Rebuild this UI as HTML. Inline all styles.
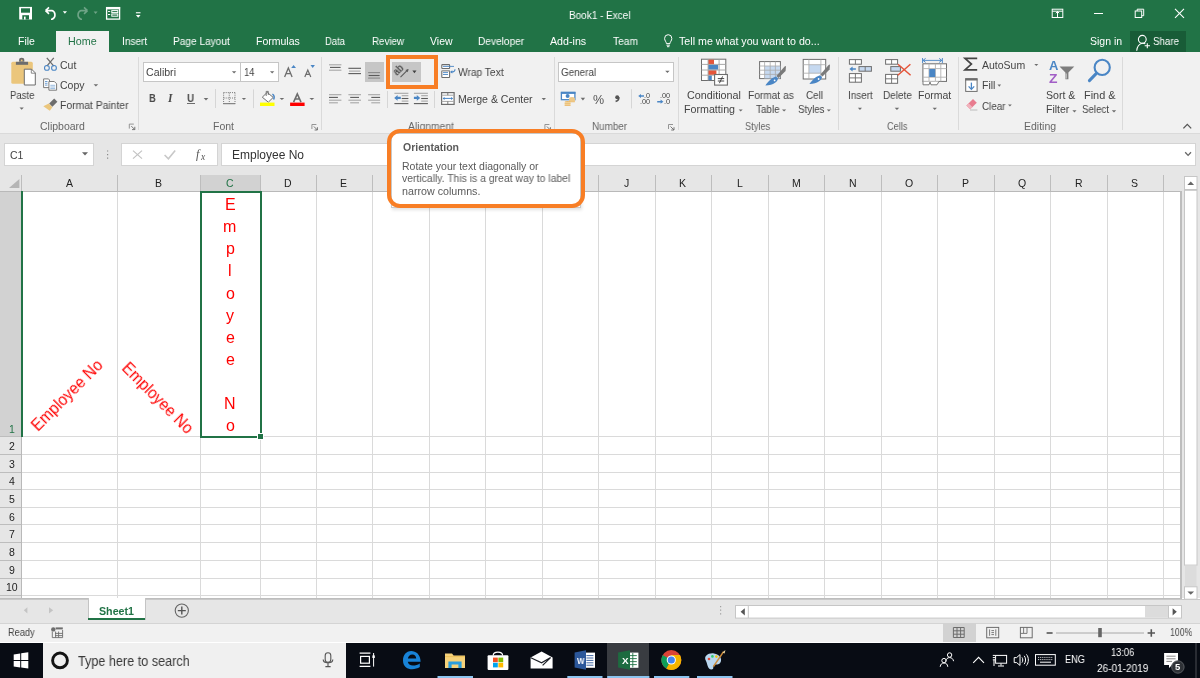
<!DOCTYPE html>
<html><head><meta charset="utf-8"><title>Book1 - Excel</title>
<style>
html,body{margin:0;padding:0;}
body{width:1200px;height:678px;overflow:hidden;position:relative;background:#fff;font-family:"Liberation Sans", sans-serif;}
.a{position:absolute;}
.t{line-height:0;white-space:pre;will-change:transform;}
svg.a{overflow:visible;}

</style></head><body>
<div class="a" style="left:0px;top:0px;width:1200px;height:52px;background:#217346;"></div>
<div class="a t" style="left:568.50px;top:15px;font-size:10.5px;color:#ffffff;transform:scaleX(0.9493);transform-origin:0 4px;">Book1 - Excel</div>
<svg class="a" style="left:0px;top:0px;" width="150" height="30" viewBox="0 0 150 30">
<rect x="19.2" y="6.9" width="12.8" height="12.6" fill="#ffffff"/>
<rect x="21" y="8.3" width="9" height="4.4" fill="#217346"/>
<rect x="22.3" y="15.2" width="6.7" height="4.3" fill="#217346"/>
<rect x="24" y="16.6" width="1.6" height="2.9" fill="#ffffff"/>
<path d="M45.5 10.6 L49 7.4 M45.5 10.6 L49 13.8 M45.6 10.6 H52 A4.6 4.6 0 0 1 52 19.2 H51" stroke="#ffffff" stroke-width="1.6" fill="none"/>
<path d="M62.8 11.3 H67 L64.9 13.8 Z" fill="#ffffff"/>
<g opacity="0.35"><path d="M87.5 10.6 L84 7.4 M87.5 10.6 L84 13.8 M87.4 10.6 H81 A4.6 4.6 0 0 0 81 19.2 H82" stroke="#ffffff" stroke-width="1.6" fill="none"/>
<path d="M93.6 11.6 H97.6 L95.6 14.1 Z" fill="#ffffff"/></g>
<rect x="106.6" y="7.6" width="13" height="11.5" fill="none" stroke="#ffffff" stroke-width="1.3"/>
<rect x="106" y="7" width="14.1" height="2.4" fill="#ffffff"/>
<rect x="108" y="11" width="2.2" height="0.9" fill="#ffffff"/>
<rect x="108" y="14" width="2.2" height="1" fill="#ffffff"/>
<rect x="111.8" y="10.6" width="6" height="2" fill="none" stroke="#ffffff" stroke-width="1"/>
<rect x="111.8" y="14" width="6" height="2.2" fill="none" stroke="#ffffff" stroke-width="1"/>
<rect x="135.9" y="12.2" width="4.6" height="1.1" fill="#ffffff"/>
<path d="M135.9 15 H140.5 L138.2 17.8 Z" fill="#ffffff"/>
</svg>
<svg class="a" style="left:1040px;top:0px;" width="160" height="30" viewBox="0 0 160 30">
<rect x="12.2" y="9.2" width="10.6" height="8.3" fill="none" stroke="#ffffff" stroke-width="1"/>
<path d="M12.2 11.2 H22.8 M17.5 11.2 V17.5 M15.8 13.2 L17.5 11.6 L19.2 13.2" stroke="#ffffff" stroke-width="1" fill="none"/>
<path d="M54 13.5 H63" stroke="#ffffff" stroke-width="1"/>
<rect x="95.2" y="11" width="6.5" height="6.5" fill="none" stroke="#ffffff" stroke-width="1"/>
<path d="M97.2 11 V9.2 H103.7 V15.7 H101.7" stroke="#ffffff" stroke-width="1" fill="none"/>
<path d="M135 8.8 L144 17.8 M144 8.8 L135 17.8" stroke="#ffffff" stroke-width="1.1"/>
</svg>
<div class="a" style="left:56px;top:31px;width:53px;height:21px;background:#f1f1f1;"></div>
<div class="a t" style="left:17.50px;top:41px;font-size:10.5px;color:#ffffff;transform:scaleX(0.9751);transform-origin:0 4px;">File</div>
<div class="a t" style="left:67.70px;top:41px;font-size:10.5px;color:#217346;transform:scaleX(1.0209);transform-origin:0 4px;">Home</div>
<div class="a t" style="left:121.70px;top:41px;font-size:10.5px;color:#ffffff;transform:scaleX(0.9632);transform-origin:0 4px;">Insert</div>
<div class="a t" style="left:173.20px;top:41px;font-size:10.5px;color:#ffffff;transform:scaleX(0.9632);transform-origin:0 4px;">Page Layout</div>
<div class="a t" style="left:255.70px;top:41px;font-size:10.5px;color:#ffffff;transform:scaleX(0.9939);transform-origin:0 4px;">Formulas</div>
<div class="a t" style="left:325.00px;top:41px;font-size:10.5px;color:#ffffff;transform:scaleX(0.9014);transform-origin:0 4px;">Data</div>
<div class="a t" style="left:371.70px;top:41px;font-size:10.5px;color:#ffffff;transform:scaleX(0.9292);transform-origin:0 4px;">Review</div>
<div class="a t" style="left:429.50px;top:41px;font-size:10.5px;color:#ffffff;">View</div>
<div class="a t" style="left:477.50px;top:41px;font-size:10.5px;color:#ffffff;transform:scaleX(0.9650);transform-origin:0 4px;">Developer</div>
<div class="a t" style="left:550.00px;top:41px;font-size:10.5px;color:#ffffff;transform:scaleX(1.0166);transform-origin:0 4px;">Add-ins</div>
<div class="a t" style="left:612.50px;top:41px;font-size:10.5px;color:#ffffff;transform:scaleX(0.9732);transform-origin:0 4px;">Team</div>
<div class="a t" style="left:679.00px;top:41px;font-size:10.5px;color:#ffffff;transform:scaleX(1.0171);transform-origin:0 4px;">Tell me what you want to do...</div>
<div class="a t" style="left:1089.60px;top:41px;font-size:10.5px;color:#ffffff;transform:scaleX(0.9873);transform-origin:0 4px;">Sign in</div>
<div class="a" style="left:1130px;top:31px;width:56px;height:21px;background:#185c37;"></div>
<div class="a t" style="left:1153.00px;top:41px;font-size:10.5px;color:#ffffff;transform:scaleX(0.9275);transform-origin:0 4px;">Share</div>
<svg class="a" style="left:1130px;top:30px;" width="30" height="24" viewBox="0 0 30 24"><circle cx="12.3" cy="9.3" r="3.9" fill="none" stroke="#ffffff" stroke-width="1.1"/>
<path d="M6.7 20.8 C7 17 9 14 12.3 13.2 C13.5 13.1 14.5 13.4 15.3 13.8" fill="none" stroke="#ffffff" stroke-width="1.1"/>
<path d="M14.7 15.7 H20 M17.3 13.2 V18.3" stroke="#ffffff" stroke-width="1.1"/></svg>
<svg class="a" style="left:660px;top:30px;" width="16" height="22" viewBox="0 0 16 22"><path d="M6.4 13.6 C6.4 11.8 4.6 10.8 4.6 8.4 A3.6 3.7 0 0 1 11.8 8.4 C11.8 10.8 10 11.8 10 13.6 Z" fill="none" stroke="#ffffff" stroke-width="1"/>
<path d="M6.5 15.2 H9.9 M7 16.7 H9.4" stroke="#ffffff" stroke-width="1"/></svg>
<div class="a" style="left:0px;top:52px;width:1200px;height:81px;background:#f1f1f1;"></div>
<div class="a" style="left:392px;top:62px;width:29px;height:20px;background:#c6c6c6;"></div>
<div class="a" style="left:364.5px;top:62px;width:19.5px;height:20px;background:#c6c6c6;"></div>
<div class="a" style="left:0px;top:133px;width:1200px;height:1px;background:#dadada;"></div>
<div class="a" style="left:138px;top:57px;width:1px;height:73px;background:#dadada;"></div>
<div class="a" style="left:321px;top:57px;width:1px;height:73px;background:#dadada;"></div>
<div class="a" style="left:554px;top:57px;width:1px;height:73px;background:#dadada;"></div>
<div class="a" style="left:678px;top:57px;width:1px;height:73px;background:#dadada;"></div>
<div class="a" style="left:837.5px;top:57px;width:1px;height:73px;background:#dadada;"></div>
<div class="a" style="left:957.5px;top:57px;width:1px;height:73px;background:#dadada;"></div>
<div class="a" style="left:1122px;top:57px;width:1px;height:73px;background:#dadada;"></div>
<div class="a t" style="left:39.80px;top:126px;font-size:10.5px;color:#666666;transform:scaleX(0.9899);transform-origin:0 4px;">Clipboard</div>
<div class="a t" style="left:212.90px;top:126px;font-size:10.5px;color:#666666;transform:scaleX(0.9802);transform-origin:0 4px;">Font</div>
<div class="a t" style="left:408.00px;top:126px;font-size:10.5px;color:#666666;transform:scaleX(0.9849);transform-origin:0 4px;">Alignment</div>
<div class="a t" style="left:591.90px;top:126px;font-size:10.5px;color:#666666;transform:scaleX(0.9395);transform-origin:0 4px;">Number</div>
<div class="a t" style="left:744.70px;top:126px;font-size:10.5px;color:#666666;transform:scaleX(0.8813);transform-origin:0 4px;">Styles</div>
<div class="a t" style="left:887.00px;top:126px;font-size:10.5px;color:#666666;transform:scaleX(0.8782);transform-origin:0 4px;">Cells</div>
<div class="a t" style="left:1024.00px;top:126px;font-size:10.5px;color:#666666;">Editing</div>
<div class="a t" style="left:10.00px;top:95px;font-size:10.5px;color:#444444;transform:scaleX(0.9122);transform-origin:0 4px;">Paste</div>
<svg class="a" style="left:0px;top:52px;" width="140" height="62" viewBox="0 0 140 62">
<rect x="11.3" y="9.8" width="21.5" height="22" rx="1.5" fill="#ebc67c"/>
<rect x="15.9" y="9.8" width="12.2" height="3" fill="#6d6d6d"/>
<path d="M19.1 9.8 V8.2 A2.6 2.4 0 0 1 24.3 8.2 V9.8 Z" fill="#6d6d6d"/>
<circle cx="21.7" cy="8.4" r="0.9" fill="#ebc67c"/>
<path d="M24.3 17.2 H31.6 L35.3 20.9 V33 H24.3 Z" fill="#fff" stroke="#6d6d6d" stroke-width="1"/>
<path d="M31.3 17.2 V21.2 H35.3" fill="none" stroke="#6d6d6d" stroke-width="0.8"/>
<path d="M19.5 55.6 H23.8 L21.65 57.7 Z" fill="#6d6d6d"/>
<path d="M46.8 5.8 L53.8 14.2 M53.8 5.8 L46.8 14.2" stroke="#6d6d6d" stroke-width="1.3"/>
<circle cx="46.9" cy="15.9" r="2.4" fill="none" stroke="#4a86c5" stroke-width="1.1"/>
<circle cx="54" cy="15.9" r="2.4" fill="none" stroke="#4a86c5" stroke-width="1.1"/>
<path d="M43.6 26.9 H48.5 L49.5 28 V35.6 H43.6 Z" fill="#fff" stroke="#6d6d6d" stroke-width="0.9"/>
<path d="M45 29.5 H47.5 M45 31.3 H47.5 M45 33.1 H47.5" stroke="#4a86c5" stroke-width="0.8"/>
<path d="M48.9 29.5 H54.3 L56.6 31.8 V38.2 H48.9 Z" fill="#fff" stroke="#6d6d6d" stroke-width="0.9"/>
<path d="M50.3 33.3 H55.2 M50.3 35 H55.2 M50.3 36.6 H55.2" stroke="#4a86c5" stroke-width="0.8" opacity="0.7"/>
<path d="M43.3 54.2 L48.8 51.6 L52.4 55.2 L49.8 58.7 Z" fill="#ebc67c"/>
<path d="M49.2 51.5 L54.2 46.5 L57.4 49.7 L52.4 54.7 Z" fill="#6d6d6d"/>
</svg>
<div class="a t" style="left:60.40px;top:65px;font-size:10.5px;color:#444444;">Cut</div>
<div class="a t" style="left:60.40px;top:84.5px;font-size:10.5px;color:#444444;transform:scaleX(0.9912);transform-origin:0 4px;">Copy</div>
<div class="a t" style="left:60.40px;top:105px;font-size:10.5px;color:#444444;transform:scaleX(0.9877);transform-origin:0 4px;">Format Painter</div>
<div class="a" style="left:143px;top:62px;width:98px;height:20px;background:#ffffff;border:1px solid #c6c6c6;box-sizing:border-box;"></div>
<div class="a" style="left:240px;top:62px;width:39px;height:20px;background:#ffffff;border:1px solid #c6c6c6;box-sizing:border-box;"></div>
<div class="a t" style="left:145.80px;top:72px;font-size:10.5px;color:#444444;transform:scaleX(1.0079);transform-origin:0 4px;">Calibri</div>
<div class="a t" style="left:244.00px;top:72px;font-size:10.5px;color:#444444;transform:scaleX(0.8984);transform-origin:0 4px;">14</div>
<svg class="a" style="left:0px;top:0px;" width="1200" height="140" viewBox="0 0 1200 140">
<path d="M231.9 71.2 H236.3 L234.10000000000002 73.6 Z" fill="#6d6d6d"/>
<path d="M93.6 84.2 H98.2 L95.9 86.6 Z" fill="#6d6d6d"/>
<path d="M270 71.2 H274.3 L272.15 73.6 Z" fill="#6d6d6d"/>
<path d="M284.6 76.9 L288.35 67.9 L292.1 76.9 M285.9 73.6 H290.8" fill="none" stroke="#6d6d6d" stroke-width="1.3"/>
<path d="M291.2 67.9 H296 L293.6 65 Z" fill="#4a86c5"/>
<path d="M304.8 76.9 L307.8 69.9 L310.8 76.9 M305.9 74.3 H309.7" fill="none" stroke="#6d6d6d" stroke-width="1.2"/>
<path d="M310.5 65 H314.9 L312.7 67.9 Z" fill="#4a86c5"/>
<path d="M203.7 98 H208.3 L206.0 100.4 Z" fill="#6d6d6d"/>
<rect x="215" y="89" width="1" height="19" fill="#d6d6d6"/>
<path d="M241.8 97.9 H246.1 L243.95 100 Z" fill="#6d6d6d"/>
<rect x="253" y="89.4" width="1" height="18.7" fill="#d6d6d6"/>
<path d="M279.6 97.9 H284.2 L281.9 100 Z" fill="#6d6d6d"/>
<path d="M309.4 97.9 H314.3 L311.85 100 Z" fill="#6d6d6d"/>
<path d="M223.6 92.6 H235 M223.6 92.6 V103.6 M235 92.6 V103.6 M223.6 98 H235 M229.3 92.6 V103.6" fill="none" stroke="#6d6d6d" stroke-width="0.9" stroke-dasharray="1 1.1"/>
<path d="M223.1 103.7 H235.3" stroke="#6d6d6d" stroke-width="1"/>
<path d="M262.3 97.2 L267.2 92.4 L273.2 97.4 L268.3 102.2 Z" fill="#fff" stroke="#6d6d6d" stroke-width="1"/>
<path d="M266.2 96 V91.4 H268.3 V95" fill="none" stroke="#6d6d6d" stroke-width="0.9"/>
<path d="M272.4 94.2 C274.5 95.5 274.6 97.8 273.5 99.5" fill="none" stroke="#4a86c5" stroke-width="1.5"/>
<rect x="260" y="102.6" width="14.5" height="3.4" fill="#ffff00"/>
<path d="M293.6 102.2 L297.3 93.9 L301 102.2 M295 99 H299.6" fill="none" stroke="#6d6d6d" stroke-width="1.6"/>
<rect x="290.1" y="102.6" width="14.5" height="3.4" fill="#ff0000"/>
</svg>
<div class="a t" style="left:148.70px;top:98.3px;font-size:11px;color:#4a4a4a;font-weight:bold;transform:scaleX(0.8550);transform-origin:0 4px;">B</div>
<div class="a t" style="left:168.30px;top:98.3px;font-size:11.5px;color:#4a4a4a;font-family:'Liberation Serif';font-style:italic;font-weight:bold;">I</div>
<div class="a t" style="left:187.30px;top:98.3px;font-size:11px;color:#4a4a4a;font-weight:bold;transform:scaleX(0.9053);transform-origin:0 4px;">U</div>
<div class="a" style="left:187px;top:103.2px;width:8px;height:1px;background:#6d6d6d;"></div>
<div class="a t" style="left:458.00px;top:72px;font-size:10.5px;color:#444444;transform:scaleX(0.9725);transform-origin:0 4px;">Wrap Text</div>
<div class="a t" style="left:458.40px;top:99px;font-size:10.5px;color:#444444;transform:scaleX(1.0064);transform-origin:0 4px;">Merge &amp; Center</div>
<svg class="a" style="left:0px;top:0px;" width="1200" height="140" viewBox="0 0 1200 140">
<path d="M329 64.8 H341.4" stroke="#a6a6a6" stroke-width="1.1"/><path d="M330 67.4 H340.6" stroke="#5a5a5a" stroke-width="1.1"/><path d="M329 70.2 H341.4" stroke="#a6a6a6" stroke-width="1.1"/>
<path d="M348.4 68.3 H361" stroke="#5a5a5a" stroke-width="1.1"/><path d="M349 71.1 H360.4" stroke="#a6a6a6" stroke-width="1.1"/><path d="M348.4 73.6 H361" stroke="#5a5a5a" stroke-width="1.1"/>
<path d="M368.1 72.6 H380.1" stroke="#8a8a8a" stroke-width="1.1"/><path d="M368.6 75.5 H379.6" stroke="#5a5a5a" stroke-width="1.1"/><path d="M368.1 78.1 H380.1" stroke="#8a8a8a" stroke-width="1.1"/>
<path d="M329 94.7 H341.4" stroke="#a6a6a6" stroke-width="1.1"/><path d="M329 97.4 H337.9" stroke="#5a5a5a" stroke-width="1.1"/><path d="M329 100.2 H341.4" stroke="#a6a6a6" stroke-width="1.1"/><path d="M329 102.8 H337.9" stroke="#a6a6a6" stroke-width="1.1"/>
<path d="M348.4 94.7 H361" stroke="#a6a6a6" stroke-width="1.1"/><path d="M350.2 97.4 H359" stroke="#5a5a5a" stroke-width="1.1"/><path d="M348.4 100.2 H361" stroke="#a6a6a6" stroke-width="1.1"/><path d="M350.2 102.8 H359" stroke="#a6a6a6" stroke-width="1.1"/>
<path d="M368.1 94.7 H380.1" stroke="#a6a6a6" stroke-width="1.1"/><path d="M371.3 97.4 H380.1" stroke="#5a5a5a" stroke-width="1.1"/><path d="M368.1 100.2 H380.1" stroke="#a6a6a6" stroke-width="1.1"/><path d="M371.3 102.8 H380.1" stroke="#a6a6a6" stroke-width="1.1"/>
<rect x="387" y="91" width="1" height="17" fill="#d6d6d6"/>
<rect x="434" y="91" width="1" height="17" fill="#d6d6d6"/>
<path d="M394.4 93.3 H408.4" stroke="#a6a6a6" stroke-width="1.1"/><path d="M401.7 95.7 H408.4" stroke="#a6a6a6" stroke-width="1.1"/><path d="M401.7 98.5 H408.4" stroke="#5a5a5a" stroke-width="1.1"/><path d="M401.7 101.1 H408.4" stroke="#a6a6a6" stroke-width="1.1"/><path d="M394.4 103.6 H408.4" stroke="#5a5a5a" stroke-width="1.1"/>
<path d="M394.2 97.9 L397.6 95 V96.8 H400.8 V99 H397.6 V100.8 Z" fill="#4a86c5"/>
<path d="M413.9 93.3 H427.9" stroke="#a6a6a6" stroke-width="1.1"/><path d="M421.2 95.7 H427.9" stroke="#a6a6a6" stroke-width="1.1"/><path d="M421.2 98.5 H427.9" stroke="#5a5a5a" stroke-width="1.1"/><path d="M421.2 101.1 H427.9" stroke="#a6a6a6" stroke-width="1.1"/><path d="M413.9 103.6 H427.9" stroke="#5a5a5a" stroke-width="1.1"/>
<path d="M420.2 97.9 L416.8 95 V96.8 H413.9 V99 H416.8 V100.8 Z" fill="#4a86c5"/>
<rect x="441.6" y="92.6" width="12.5" height="11.8" fill="#fff" stroke="#6d6d6d" stroke-width="1.2"/>
<path d="M441.6 95.2 H454.1 M441.6 101.4 H454.1" stroke="#a6a6a6" stroke-width="1"/>
<path d="M447.8 92.6 V95.2 M447.8 101.4 V104.4" stroke="#6d6d6d" stroke-width="0.9"/>
<path d="M443 98.4 H452.6" stroke="#4a86c5" stroke-width="1"/>
<path d="M442.6 98.4 L444.6 96.9 V99.9 Z M453 98.4 L451 96.9 V99.9 Z" fill="#4a86c5"/>
<rect x="441.8" y="64.6" width="7.8" height="3.9" rx="0.6" fill="#fff" stroke="#6d6d6d" stroke-width="1.1"/>
<path d="M443 66.4 H454" stroke="#4a86c5" stroke-width="0.9"/>
<rect x="441.8" y="70.8" width="7.8" height="6.7" rx="0.6" fill="#fff" stroke="#6d6d6d" stroke-width="1.1"/>
<path d="M442 71.1 H449.4" stroke="#bbb" stroke-width="1"/>
<path d="M443 72.6 H448 M443 74.5 H448" stroke="#4a86c5" stroke-width="0.9"/>
<path d="M455 69.2 C455 71.2 453.5 72 451.3 72" fill="none" stroke="#4a86c5" stroke-width="1.1"/>
<path d="M450 71.9 L452.3 70.2 V73.6 Z" fill="#4a86c5"/>
<path d="M400.5 77.2 L408 69.7" stroke="#5a5a5a" stroke-width="1.1"/>
<path d="M408.6 69 L405.4 69.9 L407.7 72.2 Z" fill="#5a5a5a"/>
<path d="M412.4 70.6 H416.5 L414.45 73.2 Z" fill="#404040"/>
<path d="M541.6 98 H546 L543.8 100.2 Z" fill="#6d6d6d"/>
</svg>
<div class="a t" style="left:396.60px;top:71.8px;font-size:11px;color:#505050;font-weight:bold;transform:rotate(-45deg) scaleX(0.8175);transform-origin:0 4px;">ab</div>
<div class="a" style="left:558px;top:62px;width:116px;height:20px;background:#ffffff;border:1px solid #c6c6c6;box-sizing:border-box;"></div>
<div class="a t" style="left:561.40px;top:71.5px;font-size:10.5px;color:#444444;transform:scaleX(0.9395);transform-origin:0 4px;">General</div>
<svg class="a" style="left:0px;top:0px;" width="1200" height="140" viewBox="0 0 1200 140">
<rect x="561.4" y="92.4" width="13.5" height="7.3" fill="#fff" stroke="#4a86c5" stroke-width="1.3"/>
<rect x="560.9" y="91.9" width="14.5" height="2" fill="#4a86c5"/>
<circle cx="567.6" cy="96" r="2" fill="#4a86c5"/>
<ellipse cx="572" cy="98.3" rx="2.9" ry="1.1" fill="#e8b86a"/>
<rect x="569.1" y="98.4" width="5.8" height="3.6" fill="#f2d49c"/>
<path d="M569.1 100 H574.9 M569.1 101.8 H574.9" stroke="#e8b86a" stroke-width="0.8"/>
<ellipse cx="567.6" cy="102" rx="2.9" ry="1.1" fill="#e8b86a"/>
<rect x="564.7" y="102.1" width="5.8" height="3.6" fill="#f2d49c"/>
<path d="M564.7 103.7 H570.5 M564.7 105.5 H570.5" stroke="#e8b86a" stroke-width="0.8"/>
<path d="M580.7 97.8 H585.1 L582.9000000000001 100.4 Z" fill="#6d6d6d"/>
<rect x="631" y="89.2" width="1" height="19.2" fill="#d6d6d6"/>
<path d="M638.2 96 L641 93.9 V95.3 H644 V96.7 H641 V98.1 Z" fill="#4a86c5"/>
<path d="M663.4 101.7 L660.6 99.6 V101 H657.2 V102.4 H660.6 V103.8 Z" fill="#4a86c5"/>
<rect x="701.5" y="59.2" width="24.3" height="21.3" fill="#fff" stroke="#6d6d6d" stroke-width="1"/>
<rect x="708.1" y="59.7" width="5.9" height="4.7" fill="#e5553a"/>
<rect x="708.1" y="64.9" width="10" height="4.8" fill="#4a86c5"/>
<rect x="708.1" y="70.2" width="8.3" height="4.7" fill="#e5553a"/>
<rect x="708.1" y="75.4" width="3.7" height="4.7" fill="#4a86c5"/>
<path d="M708.1 59.2 V80.5 M719.1 59.2 V80.5 M701.5 64.4 H725.8 M701.5 70 H725.8 M701.5 75.2 H725.8" stroke="#a0a0a0" stroke-width="0.9"/>
<rect x="714.6" y="74.5" width="12.8" height="10.6" fill="#fff" stroke="#6d6d6d" stroke-width="1.1"/>
<path d="M717.8 78.6 H724.2 M717.8 81 H724.2 M722.6 76.4 L719.4 83.2" stroke="#333" stroke-width="0.9"/>
<rect x="759.6" y="61.6" width="20.8" height="17" fill="#fff" stroke="#6d6d6d" stroke-width="1"/>
<rect x="764.6" y="66" width="15.6" height="12.4" fill="#c6d9f0"/>
<path d="M764.6 61.6 V78.6 M770.2 61.6 V78.6 M775.4 61.6 V78.6 M759.6 66 H780.4 M759.6 70.2 H780.4 M759.6 74.4 H780.4" stroke="#a9a9a9" stroke-width="0.8"/>
<path d="M784.6 66.4 L786 66 L785.6 71 L778.5 78 L776.4 76 Z" fill="#7a7a7a"/>
<path d="M776 76.6 L778 78.5 C777.5 82 774 85 765.4 85.4 C768 82 771 78 776 76.6 Z" fill="#4a86c5"/>
<circle cx="774.6" cy="80.4" r="0.9" fill="#fff"/>
<rect x="803.2" y="59.4" width="22.5" height="19.6" fill="#fff" stroke="#6d6d6d" stroke-width="1"/>
<rect x="808.9" y="64.7" width="12" height="8.5" fill="#c6d9f0"/>
<path d="M808.9 59.4 V79 M820.9 59.4 V79 M803.2 64.7 H825.7 M803.2 73.2 H825.7" stroke="#a9a9a9" stroke-width="0.8"/>
<path d="M828.6 65 L830 64.6 L829.6 69.6 L822.5 76.6 L820.4 74.6 Z" fill="#7a7a7a"/>
<path d="M820 75.2 L822 77.1 C821.5 80.6 818 83.6 809.4 84 C812 80.6 815 76.6 820 75.2 Z" fill="#4a86c5"/>
<circle cx="818.6" cy="79" r="0.9" fill="#fff"/>
<path d="M738.7 109.4 H742.7 L740.7 111.4 Z" fill="#6d6d6d"/>
<path d="M782 109.4 H786.2 L784.1 111.4 Z" fill="#6d6d6d"/>
<path d="M826.8 109.4 H830.8 L828.8 111.4 Z" fill="#6d6d6d"/>
<rect x="849.4" y="59.6" width="12" height="4.6" fill="#fff" stroke="#6d6d6d" stroke-width="1"/>
<path d="M855.4 59.6 V64.2" stroke="#6d6d6d" stroke-width="0.9"/>
<path d="M849.4 69 L852.6 66.4 V68.2 H855.9 V69.8 H852.6 V71.6 Z" fill="#4a86c5"/>
<rect x="859" y="66.6" width="12.4" height="4.6" fill="#c6d9f0" stroke="#6d6d6d" stroke-width="1"/>
<path d="M865.2 66.6 V71.2" stroke="#6d6d6d" stroke-width="0.9"/>
<rect x="849.4" y="73.6" width="12" height="8.6" fill="#fff" stroke="#6d6d6d" stroke-width="1"/>
<path d="M855.4 73.6 V82.2 M849.4 77.9 H861.4" stroke="#6d6d6d" stroke-width="0.9"/>
<rect x="885.6" y="59.6" width="12" height="4.6" fill="#fff" stroke="#6d6d6d" stroke-width="1"/>
<path d="M891.6 59.6 V64.2" stroke="#6d6d6d" stroke-width="0.9"/>
<rect x="890.8" y="66.6" width="9.6" height="4.6" fill="#c6d9f0" stroke="#6d6d6d" stroke-width="1"/>
<rect x="885.6" y="74.4" width="12" height="8.9" fill="#fff" stroke="#6d6d6d" stroke-width="1"/>
<path d="M891.6 74.4 V83.3 M885.6 78.8 H897.6" stroke="#6d6d6d" stroke-width="0.9"/>
<path d="M898 64.3 L910.6 75.3 M910.4 64.3 L897.8 75.3" stroke="#e5553a" stroke-width="1.5"/>
<path d="M922.5 60.4 H942.2" stroke="#4a86c5" stroke-width="0.9"/>
<path d="M922.5 58 V63 M942.4 58 V63" stroke="#4a86c5" stroke-width="0.9"/>
<path d="M923 60.4 L925.6 58.4 M923 60.4 L925.6 62.4 M941.8 60.4 L939.2 58.4 M941.8 60.4 L939.2 62.4" stroke="#4a86c5" stroke-width="1"/>
<rect x="922.9" y="63.8" width="23.6" height="17.6" fill="#fff" stroke="#6d6d6d" stroke-width="1"/>
<path d="M929 63.8 V81.4 M935.4 63.8 V81.4 M940.8 63.8 V81.4 M922.9 68.6 H946.5 M922.9 77.2 H946.5" stroke="#b0b0b0" stroke-width="0.9"/>
<rect x="929.2" y="69" width="6" height="8" fill="#4a86c5"/>
<path d="M923 81.4 V84.8 H929 L930 82 L931 84.8 H937 L939 81.4" fill="#fff" stroke="#6d6d6d" stroke-width="0.9"/>
<path d="M857.9 107.8 H862 L859.95 110 Z" fill="#6d6d6d"/>
<path d="M894.7 107.8 H899.2 L896.95 110 Z" fill="#6d6d6d"/>
<path d="M932.6 107.8 H936.9 L934.75 110 Z" fill="#6d6d6d"/>
<path d="M977.2 58.4 H965 L971.4 64.1 L965 69.8 H977.2" fill="none" stroke="#444" stroke-width="1.7"/>
<path d="M1034.3 63.9 H1038.3 L1036.3 66.1 Z" fill="#6d6d6d"/>
<rect x="965.7" y="78.8" width="11.4" height="12.6" fill="#fff" stroke="#6d6d6d" stroke-width="1"/>
<rect x="965.2" y="78.3" width="12.2" height="2.2" fill="#6d6d6d"/>
<path d="M971.4 82.6 V89" stroke="#4a86c5" stroke-width="1.3"/>
<path d="M968.6 86.4 L971.4 89.4 L974.2 86.4" fill="none" stroke="#4a86c5" stroke-width="1.3"/>
<path d="M997.5 84.6 H1001.1 L999.3 86.7 Z" fill="#6d6d6d"/>
<path d="M966.4 105.4 L973 98.9 L976.8 102.7 L970.2 109.2 Z" fill="#e87b8e"/>
<path d="M966.4 105.4 L968.6 103.2 L972.4 107 L970.2 109.2 Z" fill="#f0b3bd"/>
<path d="M970 110 H977.4" stroke="#b5b5b5" stroke-width="0.9"/>
<path d="M1008 104.4 H1011.8 L1009.9 106.6 Z" fill="#6d6d6d"/>
<path d="M1059.5 66.6 H1074.3 L1068.4 72.6 V79.3 H1065.4 V72.6 Z" fill="#7d7d7d"/>
<path d="M1066.2 73.5 V78.6" stroke="#ddd" stroke-width="0.9"/>
<circle cx="1102.2" cy="67.4" r="7.6" fill="none" stroke="#4a86c5" stroke-width="2.1"/>
<path d="M1096.4 73.4 L1089.4 80.6" stroke="#4a86c5" stroke-width="3" stroke-linecap="round"/>
<path d="M1072.4 110.3 H1076.5 L1074.45 112.4 Z" fill="#6d6d6d"/>
<path d="M1111.8 110.3 H1116.2 L1114.0 112.4 Z" fill="#6d6d6d"/>
<path d="M1183.4 128.4 L1187.3 124.4 L1191.2 128.4" fill="none" stroke="#555" stroke-width="1.3"/>
</svg>
<div class="a t" style="left:593.30px;top:100px;font-size:12.5px;color:#555;transform:scaleX(0.9888);transform-origin:0 4px;">%</div>
<svg class="a" style="left:600px;top:80px;" width="30" height="30" viewBox="0 0 30 30"><circle cx="17.2" cy="17.2" r="2" fill="#555"/><path d="M18.9 17.4 C19 19.6 17.6 21 15.6 21.4" fill="none" stroke="#555" stroke-width="1.6"/></svg>
<div class="a t" style="left:644.40px;top:95.7px;font-size:6.5px;color:#444;transform:scaleX(1.1066);transform-origin:0 2px;">.0</div>
<div class="a t" style="left:640.20px;top:102px;font-size:6.5px;color:#444;transform:scaleX(1.1275);transform-origin:0 2px;">.00</div>
<div class="a t" style="left:660.00px;top:95.7px;font-size:6.5px;color:#444;transform:scaleX(1.1275);transform-origin:0 2px;">.00</div>
<div class="a t" style="left:664.00px;top:102px;font-size:6.5px;color:#444;transform:scaleX(1.1435);transform-origin:0 2px;">.0</div>
<div class="a t" style="left:1048.70px;top:65.9px;font-size:13px;color:#4a86c5;font-weight:bold;transform:scaleX(0.9903);transform-origin:0 4px;">A</div>
<div class="a t" style="left:1049.00px;top:78.8px;font-size:13px;color:#a25ec6;font-weight:bold;transform:scaleX(1.0688);transform-origin:0 4px;">Z</div>
<div class="a t" style="left:687.00px;top:94.7px;font-size:10.5px;color:#444444;transform:scaleX(1.0258);transform-origin:0 4px;">Conditional</div>
<div class="a t" style="left:684.20px;top:108.9px;font-size:10.5px;color:#444444;transform:scaleX(1.0162);transform-origin:0 4px;">Formatting</div>
<div class="a t" style="left:747.50px;top:94.7px;font-size:10.5px;color:#444444;transform:scaleX(0.9690);transform-origin:0 4px;">Format as</div>
<div class="a t" style="left:755.50px;top:108.9px;font-size:10.5px;color:#444444;transform:scaleX(0.9399);transform-origin:0 4px;">Table</div>
<div class="a t" style="left:806.00px;top:94.7px;font-size:10.5px;color:#444444;transform:scaleX(0.9396);transform-origin:0 4px;">Cell</div>
<div class="a t" style="left:797.50px;top:108.9px;font-size:10.5px;color:#444444;transform:scaleX(0.9268);transform-origin:0 4px;">Styles</div>
<div class="a t" style="left:847.60px;top:94.8px;font-size:10.5px;color:#444444;transform:scaleX(0.9442);transform-origin:0 4px;">Insert</div>
<div class="a t" style="left:882.70px;top:94.8px;font-size:10.5px;color:#444444;transform:scaleX(0.9519);transform-origin:0 4px;">Delete</div>
<div class="a t" style="left:917.80px;top:94.8px;font-size:10.5px;color:#444444;">Format</div>
<div class="a t" style="left:981.50px;top:64.7px;font-size:10.5px;color:#444444;">AutoSum</div>
<div class="a t" style="left:981.50px;top:85.2px;font-size:10.5px;color:#444444;transform:scaleX(0.9909);transform-origin:0 4px;">Fill</div>
<div class="a t" style="left:981.50px;top:105.6px;font-size:10.5px;color:#444444;transform:scaleX(0.9365);transform-origin:0 4px;">Clear</div>
<div class="a t" style="left:1046.40px;top:95px;font-size:10.5px;color:#444444;transform:scaleX(1.0073);transform-origin:0 4px;">Sort &amp;</div>
<div class="a t" style="left:1046.40px;top:108.8px;font-size:10.5px;color:#444444;">Filter</div>
<div class="a t" style="left:1083.60px;top:95px;font-size:10.5px;color:#444444;transform:scaleX(1.0409);transform-origin:0 4px;">Find &amp;</div>
<div class="a t" style="left:1082.00px;top:108.8px;font-size:10.5px;color:#444444;transform:scaleX(0.9251);transform-origin:0 4px;">Select</div>
<div class="a" style="left:0px;top:134px;width:1200px;height:41px;background:#e6e6e6;"></div>
<div class="a" style="left:4px;top:143px;width:90px;height:23px;background:#ffffff;border:1px solid #d4d4d4;box-sizing:border-box;"></div>
<div class="a t" style="left:10.40px;top:155.4px;font-size:10.5px;color:#444444;transform:scaleX(0.9823);transform-origin:0 4px;">C1</div>
<div class="a" style="left:121px;top:143px;width:97px;height:23px;background:#ffffff;border:1px solid #d4d4d4;box-sizing:border-box;"></div>
<div class="a" style="left:221px;top:143px;width:975px;height:23px;background:#ffffff;border:1px solid #d4d4d4;box-sizing:border-box;"></div>
<div class="a t" style="left:231.60px;top:154.7px;font-size:12px;color:#333;">Employee No</div>
<svg class="a" style="left:0px;top:0px;" width="1200" height="200" viewBox="0 0 1200 200">
<path d="M665.2 70.8 H669.6 L667.4000000000001 73 Z" fill="#6d6d6d"/>
<path d="M129.3 128.6 V124.1 H133.8" fill="none" stroke="#8a8a8a" stroke-width="0.9"/><path d="M131.3 126.1 L134.8 129.6 M134.8 126.8 V129.6 H132.0" fill="none" stroke="#6a6a6a" stroke-width="0.9"/><path d="M311.9 129 V124.5 H316.4" fill="none" stroke="#8a8a8a" stroke-width="0.9"/><path d="M313.9 126.5 L317.4 130 M317.4 127.2 V130 H314.59999999999997" fill="none" stroke="#6a6a6a" stroke-width="0.9"/><path d="M544.9 129 V124.5 H549.4" fill="none" stroke="#8a8a8a" stroke-width="0.9"/><path d="M546.9 126.5 L550.4 130 M550.4 127.2 V130 H547.6" fill="none" stroke="#6a6a6a" stroke-width="0.9"/><path d="M668.5 129 V124.5 H673" fill="none" stroke="#8a8a8a" stroke-width="0.9"/><path d="M670.5 126.5 L674 130 M674 127.2 V130 H671.2" fill="none" stroke="#6a6a6a" stroke-width="0.9"/>
<path d="M82 152.2 H88 L85.0 155.4 Z" fill="#666"/>
<path d="M107.6 150.4 V151.6 M107.6 154 V155.2 M107.6 157.6 V158.8" stroke="#8a8a8a" stroke-width="1.2"/>
<path d="M133 150.6 L142 158.6 M142 150.6 L133 158.6" stroke="#c2c2c2" stroke-width="1.2"/>
<path d="M164.6 155 L168.4 158.8 L175.2 150.6" fill="none" stroke="#c8c8c8" stroke-width="1.6"/>
<path d="M1185.2 152.2 L1188.1 155.4 L1191 152.2" fill="none" stroke="#666" stroke-width="1.3"/>
</svg>
<div class="a t" style="left:196.20px;top:154.4px;font-size:12px;color:#555;font-family:'Liberation Serif';font-style:italic;">f</div>
<div class="a t" style="left:200.60px;top:156.6px;font-size:9.5px;color:#555;font-family:'Liberation Serif';font-style:italic;">x</div>
<div class="a" style="left:0px;top:175px;width:1200px;height:16px;background:#e6e6e6;"></div>
<div class="a" style="left:200px;top:175px;width:60px;height:16px;background:#d2d2d2;"></div>
<div class="a" style="left:0px;top:191px;width:22px;height:407px;background:#e6e6e6;"></div>
<div class="a" style="left:0px;top:191px;width:22px;height:245.5px;background:#d2d2d2;"></div>
<div class="a" style="left:22px;top:191px;width:1159px;height:407px;background:#ffffff;"></div>
<div class="a" style="left:117px;top:191px;width:1px;height:407px;background:#dadada;"></div>
<div class="a" style="left:117px;top:175px;width:1px;height:16px;background:#bdbdbd;"></div>
<div class="a" style="left:200px;top:191px;width:1px;height:407px;background:#dadada;"></div>
<div class="a" style="left:200px;top:175px;width:1px;height:16px;background:#bdbdbd;"></div>
<div class="a" style="left:260px;top:191px;width:1px;height:407px;background:#dadada;"></div>
<div class="a" style="left:260px;top:175px;width:1px;height:16px;background:#bdbdbd;"></div>
<div class="a" style="left:316px;top:191px;width:1px;height:407px;background:#dadada;"></div>
<div class="a" style="left:316px;top:175px;width:1px;height:16px;background:#bdbdbd;"></div>
<div class="a" style="left:372px;top:191px;width:1px;height:407px;background:#dadada;"></div>
<div class="a" style="left:372px;top:175px;width:1px;height:16px;background:#bdbdbd;"></div>
<div class="a" style="left:429px;top:191px;width:1px;height:407px;background:#dadada;"></div>
<div class="a" style="left:429px;top:175px;width:1px;height:16px;background:#bdbdbd;"></div>
<div class="a" style="left:485px;top:191px;width:1px;height:407px;background:#dadada;"></div>
<div class="a" style="left:485px;top:175px;width:1px;height:16px;background:#bdbdbd;"></div>
<div class="a" style="left:542px;top:191px;width:1px;height:407px;background:#dadada;"></div>
<div class="a" style="left:542px;top:175px;width:1px;height:16px;background:#bdbdbd;"></div>
<div class="a" style="left:598px;top:191px;width:1px;height:407px;background:#dadada;"></div>
<div class="a" style="left:598px;top:175px;width:1px;height:16px;background:#bdbdbd;"></div>
<div class="a" style="left:655px;top:191px;width:1px;height:407px;background:#dadada;"></div>
<div class="a" style="left:655px;top:175px;width:1px;height:16px;background:#bdbdbd;"></div>
<div class="a" style="left:711px;top:191px;width:1px;height:407px;background:#dadada;"></div>
<div class="a" style="left:711px;top:175px;width:1px;height:16px;background:#bdbdbd;"></div>
<div class="a" style="left:768px;top:191px;width:1px;height:407px;background:#dadada;"></div>
<div class="a" style="left:768px;top:175px;width:1px;height:16px;background:#bdbdbd;"></div>
<div class="a" style="left:824px;top:191px;width:1px;height:407px;background:#dadada;"></div>
<div class="a" style="left:824px;top:175px;width:1px;height:16px;background:#bdbdbd;"></div>
<div class="a" style="left:881px;top:191px;width:1px;height:407px;background:#dadada;"></div>
<div class="a" style="left:881px;top:175px;width:1px;height:16px;background:#bdbdbd;"></div>
<div class="a" style="left:937px;top:191px;width:1px;height:407px;background:#dadada;"></div>
<div class="a" style="left:937px;top:175px;width:1px;height:16px;background:#bdbdbd;"></div>
<div class="a" style="left:994px;top:191px;width:1px;height:407px;background:#dadada;"></div>
<div class="a" style="left:994px;top:175px;width:1px;height:16px;background:#bdbdbd;"></div>
<div class="a" style="left:1050px;top:191px;width:1px;height:407px;background:#dadada;"></div>
<div class="a" style="left:1050px;top:175px;width:1px;height:16px;background:#bdbdbd;"></div>
<div class="a" style="left:1107px;top:191px;width:1px;height:407px;background:#dadada;"></div>
<div class="a" style="left:1107px;top:175px;width:1px;height:16px;background:#bdbdbd;"></div>
<div class="a" style="left:1163px;top:191px;width:1px;height:407px;background:#dadada;"></div>
<div class="a" style="left:1163px;top:175px;width:1px;height:16px;background:#bdbdbd;"></div>
<div class="a" style="left:22px;top:436px;width:1159px;height:1px;background:#dadada;"></div>
<div class="a" style="left:0px;top:436px;width:22px;height:1px;background:#bdbdbd;"></div>
<div class="a" style="left:22px;top:454px;width:1159px;height:1px;background:#dadada;"></div>
<div class="a" style="left:0px;top:454px;width:22px;height:1px;background:#bdbdbd;"></div>
<div class="a" style="left:22px;top:472px;width:1159px;height:1px;background:#dadada;"></div>
<div class="a" style="left:0px;top:472px;width:22px;height:1px;background:#bdbdbd;"></div>
<div class="a" style="left:22px;top:489px;width:1159px;height:1px;background:#dadada;"></div>
<div class="a" style="left:0px;top:489px;width:22px;height:1px;background:#bdbdbd;"></div>
<div class="a" style="left:22px;top:507px;width:1159px;height:1px;background:#dadada;"></div>
<div class="a" style="left:0px;top:507px;width:22px;height:1px;background:#bdbdbd;"></div>
<div class="a" style="left:22px;top:524px;width:1159px;height:1px;background:#dadada;"></div>
<div class="a" style="left:0px;top:524px;width:22px;height:1px;background:#bdbdbd;"></div>
<div class="a" style="left:22px;top:542px;width:1159px;height:1px;background:#dadada;"></div>
<div class="a" style="left:0px;top:542px;width:22px;height:1px;background:#bdbdbd;"></div>
<div class="a" style="left:22px;top:560px;width:1159px;height:1px;background:#dadada;"></div>
<div class="a" style="left:0px;top:560px;width:22px;height:1px;background:#bdbdbd;"></div>
<div class="a" style="left:22px;top:578px;width:1159px;height:1px;background:#dadada;"></div>
<div class="a" style="left:0px;top:578px;width:22px;height:1px;background:#bdbdbd;"></div>
<div class="a" style="left:22px;top:595px;width:1159px;height:1px;background:#dadada;"></div>
<div class="a" style="left:0px;top:595px;width:22px;height:1px;background:#bdbdbd;"></div>
<div class="a" style="left:21px;top:175px;width:1px;height:16px;background:#bdbdbd;"></div>
<svg class="a" style="left:0px;top:170px;" width="22" height="22" viewBox="0 0 22 22"><path d="M9 18 L19.4 9 V18 Z" fill="#b5b5b5"/></svg>
<div class="a" style="left:0px;top:190.6px;width:1181px;height:1.8px;background:#b9b9b9;"></div>
<div class="a" style="left:21px;top:191px;width:1px;height:407px;background:#b9b9b9;"></div>
<div class="a t" style="left:65.99px;top:183px;font-size:10.5px;color:#222;">A</div>
<div class="a t" style="left:154.99px;top:183px;font-size:10.5px;color:#222;">B</div>
<div class="a t" style="left:226.20px;top:183px;font-size:10.5px;color:#217346;">C</div>
<div class="a t" style="left:284.20px;top:183px;font-size:10.5px;color:#222;">D</div>
<div class="a t" style="left:340.49px;top:183px;font-size:10.5px;color:#222;">E</div>
<div class="a t" style="left:397.29px;top:183px;font-size:10.5px;color:#222;">F</div>
<div class="a t" style="left:452.91px;top:183px;font-size:10.5px;color:#222;">G</div>
<div class="a t" style="left:509.70px;top:183px;font-size:10.5px;color:#222;">H</div>
<div class="a t" style="left:568.54px;top:183px;font-size:10.5px;color:#222;">I</div>
<div class="a t" style="left:623.88px;top:183px;font-size:10.5px;color:#222;">J</div>
<div class="a t" style="left:679.49px;top:183px;font-size:10.5px;color:#222;">K</div>
<div class="a t" style="left:736.58px;top:183px;font-size:10.5px;color:#222;">L</div>
<div class="a t" style="left:791.62px;top:183px;font-size:10.5px;color:#222;">M</div>
<div class="a t" style="left:848.70px;top:183px;font-size:10.5px;color:#222;">N</div>
<div class="a t" style="left:904.91px;top:183px;font-size:10.5px;color:#222;">O</div>
<div class="a t" style="left:961.99px;top:183px;font-size:10.5px;color:#222;">P</div>
<div class="a t" style="left:1017.91px;top:183px;font-size:10.5px;color:#222;">Q</div>
<div class="a t" style="left:1074.70px;top:183px;font-size:10.5px;color:#222;">R</div>
<div class="a t" style="left:1131.49px;top:183px;font-size:10.5px;color:#222;">S</div>
<div class="a t" style="left:8.58px;top:428.7px;font-size:10.5px;color:#217346;">1</div>
<div class="a t" style="left:8.58px;top:446.2px;font-size:10.5px;color:#222;">2</div>
<div class="a t" style="left:8.58px;top:463.7px;font-size:10.5px;color:#222;">3</div>
<div class="a t" style="left:8.58px;top:481.2px;font-size:10.5px;color:#222;">4</div>
<div class="a t" style="left:8.58px;top:499.2px;font-size:10.5px;color:#222;">5</div>
<div class="a t" style="left:8.58px;top:516.7px;font-size:10.5px;color:#222;">6</div>
<div class="a t" style="left:8.58px;top:534.2px;font-size:10.5px;color:#222;">7</div>
<div class="a t" style="left:8.58px;top:552.2px;font-size:10.5px;color:#222;">8</div>
<div class="a t" style="left:8.58px;top:569.7px;font-size:10.5px;color:#222;">9</div>
<div class="a t" style="left:5.66px;top:587.2px;font-size:10.5px;color:#222;">10</div>
<div class="a" style="left:1180px;top:191px;width:2px;height:409px;background:#bdbdbd;"></div>
<div class="a" style="left:0px;top:597.5px;width:1182px;height:2px;background:#bdbdbd;"></div>
<div class="a" style="left:21px;top:191px;width:2px;height:246px;background:#217346;"></div>
<div class="a" style="left:199.5px;top:190.5px;width:62px;height:247px;border:2px solid #217346;box-sizing:border-box;"></div>
<div class="a" style="left:257.5px;top:434px;width:5px;height:5px;background:#217346;outline:1px solid #fff;"></div>
<div class="a t" style="left:224.66px;top:205.1px;font-size:16px;color:#ff0000;">E</div>
<div class="a t" style="left:223.34px;top:227.2px;font-size:16px;color:#ff0000;">m</div>
<div class="a t" style="left:225.55px;top:249.3px;font-size:16px;color:#ff0000;">p</div>
<div class="a t" style="left:228.22px;top:271.4px;font-size:16px;color:#ff0000;">l</div>
<div class="a t" style="left:225.55px;top:293.5px;font-size:16px;color:#ff0000;">o</div>
<div class="a t" style="left:226.00px;top:315.6px;font-size:16px;color:#ff0000;">y</div>
<div class="a t" style="left:225.55px;top:337.70000000000005px;font-size:16px;color:#ff0000;">e</div>
<div class="a t" style="left:225.55px;top:359.8px;font-size:16px;color:#ff0000;">e</div>
<div class="a t" style="left:224.22px;top:404.0px;font-size:16px;color:#ff0000;">N</div>
<div class="a t" style="left:225.55px;top:426.1px;font-size:16px;color:#ff0000;">o</div>
<div class="a t" style="left:37.60px;top:427.4px;font-size:16px;color:#ff0000;transform:rotate(-45deg) scaleX(0.9683);transform-origin:0 5px;">Employee No</div>
<div class="a t" style="left:120.90px;top:364.1px;font-size:16px;color:#ff0000;transform:rotate(45deg) scaleX(0.9683);transform-origin:0 5px;">Employee No</div>
<div class="a" style="left:1182px;top:175px;width:18px;height:423px;background:#e6e6e6;"></div>
<svg class="a" style="left:1180px;top:170px;" width="20" height="435" viewBox="0 0 20 435">
<rect x="4.5" y="6.5" width="12.5" height="13" fill="#fff" stroke="#c6c6c6" stroke-width="1"/>
<path d="M7.4 15 L10.75 11.6 L14.1 15 Z" fill="#666"/>
<rect x="4.5" y="20.3" width="12.5" height="374.8" fill="#fff" stroke="#c6c6c6" stroke-width="1"/>
<rect x="5" y="395.5" width="11.5" height="21" fill="#dcdcdc"/>
<rect x="4.5" y="416.8" width="12.5" height="12.4" fill="#fff" stroke="#c6c6c6" stroke-width="1"/>
<path d="M7.4 421.4 L10.75 424.8 L14.1 421.4 Z" fill="#666"/>
</svg>
<div class="a" style="left:0px;top:599px;width:1200px;height:24px;background:#e6e6e6;"></div>
<div class="a" style="left:0px;top:598.5px;width:1200px;height:1px;background:#c8c8c8;"></div>
<div class="a" style="left:88px;top:598px;width:57.5px;height:22px;background:#ffffff;border:1px solid #c4c4c4;box-sizing:border-box;border-top:none;border-bottom:none;"></div>
<div class="a" style="left:88px;top:618px;width:57px;height:2px;background:#217346;"></div>
<div class="a t" style="left:99.20px;top:610.7px;font-size:10.5px;color:#217346;font-weight:bold;transform:scaleX(1.0163);transform-origin:0 4px;">Sheet1</div>
<div class="a" style="left:0px;top:623px;width:1200px;height:19px;background:#f1f1f1;"></div>
<div class="a" style="left:0px;top:623px;width:1200px;height:1px;background:#d4d4d4;"></div>
<div class="a t" style="left:7.50px;top:632px;font-size:10.5px;color:#444444;transform:scaleX(0.8795);transform-origin:0 4px;">Ready</div>
<div class="a" style="left:942.5px;top:623px;width:33px;height:19px;background:#d2d2d2;"></div>
<div class="a t" style="left:1170.00px;top:632px;font-size:10.5px;color:#444444;transform:scaleX(0.8303);transform-origin:0 4px;">100%</div>
<svg class="a" style="left:0px;top:590px;" width="1200" height="55" viewBox="0 0 1200 55">
<path d="M27.4 17.2 L23.8 20.3 L27.4 23.4 Z" fill="#c4c4c4"/>
<path d="M49 17.2 L53.2 20.3 L49 23.4 Z" fill="#c4c4c4"/>
<circle cx="181.8" cy="20.6" r="6.6" fill="none" stroke="#666" stroke-width="1.1"/>
<path d="M177.8 20.6 H185.8 M181.8 16.6 V24.6" stroke="#555" stroke-width="1.4"/>
<path d="M720.6 16 V17.2 M720.6 19.6 V20.8 M720.6 23.2 V24.4" stroke="#a0a0a0" stroke-width="1.2"/>
<rect x="735.5" y="15.5" width="446" height="12.6" fill="#fff" stroke="#c6c6c6" stroke-width="1"/>
<rect x="1145" y="16" width="23.5" height="11.6" fill="#dcdcdc"/>
<path d="M748.3 15.5 V28.1 M1168.5 15.5 V28.1" stroke="#c6c6c6" stroke-width="1"/>
<path d="M744.8 18.2 L740.6 21.8 L744.8 25.4 Z" fill="#555"/>
<path d="M1172.6 18.2 L1176.8 21.8 L1172.6 25.4 Z" fill="#555"/>
<circle cx="53.3" cy="39.4" r="2.2" fill="#6d6d6d"/>
<rect x="55.6" y="37.4" width="7.2" height="2" fill="#6d6d6d"/>
<path d="M52.3 41.5 V47.6 H62.6 V40 M55 43.4 H62.6 M55 45.6 H62.6 M55.6 41.5 V47.6 M58.6 41.5 V47.6" fill="none" stroke="#6d6d6d" stroke-width="0.9"/>
<path d="M953.4 37.5 H964.2 V47.5 H953.4 Z M953.4 40.8 H964.2 M953.4 44.2 H964.2 M957 37.5 V47.5 M960.6 37.5 V47.5" fill="none" stroke="#6d6d6d" stroke-width="1"/>
<rect x="986.7" y="37.4" width="12" height="10.4" fill="none" stroke="#6d6d6d" stroke-width="1"/>
<path d="M989.6 39.4 V45.8 M995.8 39.4 V45.8 M991.4 40.6 H994 M991.4 42.6 H994 M991.4 44.6 H994" stroke="#6d6d6d" stroke-width="0.9"/>
<rect x="1020.4" y="37.4" width="11.8" height="10.4" fill="none" stroke="#6d6d6d" stroke-width="1"/>
<path d="M1020.4 43.4 H1027 V37.4 M1023.6 37.6 V43.2" fill="none" stroke="#6d6d6d" stroke-width="0.9"/>
<path d="M1046.6 43 H1052.6" stroke="#555" stroke-width="1.6"/>
<path d="M1056 43 H1144" stroke="#a8a8a8" stroke-width="1"/>
<rect x="1098.2" y="38" width="3.6" height="9.2" fill="#666"/>
<path d="M1147.6 43 H1155 M1151.3 39.2 V46.8" stroke="#555" stroke-width="1.6"/>
</svg>
<div class="a" style="left:0px;top:643px;width:1200px;height:35px;background:#080c14;"></div>
<div class="a" style="left:42.5px;top:643px;width:303.5px;height:35px;background:#f0f0f0;"></div>
<div class="a" style="left:607.2px;top:643px;width:42.2px;height:35px;background:#393c41;"></div>
<div class="a t" style="left:78.30px;top:661px;font-size:14px;color:#3a3a3a;transform:scaleX(0.9026);transform-origin:0 5px;">Type here to search</div>
<div class="a t" style="left:1065.30px;top:659.4px;font-size:10.5px;color:#fff;transform:scaleX(0.8785);transform-origin:0 4px;">ENG</div>
<div class="a t" style="left:1110.60px;top:651.8px;font-size:10.5px;color:#fff;transform:scaleX(0.8866);transform-origin:0 4px;">13:06</div>
<div class="a t" style="left:1096.60px;top:667.8px;font-size:10.5px;color:#fff;transform:scaleX(0.9568);transform-origin:0 4px;">26-01-2019</div>
<svg class="a" style="left:0px;top:640px;" width="1200" height="38" viewBox="0 0 1200 38">
<path d="M13.7 14.4 L20.2 13.4 V20 H13.7 Z M21.2 13.2 L28.3 12.2 V20 H21.2 Z M13.7 21 H20.2 V27.4 L13.7 26.6 Z M21.2 21 H28.3 V28.6 L21.2 27.6 Z" fill="#fff"/>
<circle cx="60" cy="20.4" r="7.4" fill="none" stroke="#141414" stroke-width="2.9"/>
<rect x="325.2" y="12.8" width="5.6" height="9.4" rx="2.8" fill="none" stroke="#555" stroke-width="1.1"/>
<path d="M323.2 19.6 C323.2 24 332.8 24 332.8 19.6 M328 23.4 V26.4 M325.4 26.6 H330.6" fill="none" stroke="#555" stroke-width="1.1"/>
<path d="M359.6 13.2 H370.4 M359.6 26.4 H370.4" stroke="#fff" stroke-width="1.2"/>
<rect x="360.6" y="16.4" width="8.8" height="6.8" fill="none" stroke="#fff" stroke-width="1.2"/>
<path d="M373.6 13 V26.6" stroke="#fff" stroke-width="1"/>
<rect x="372.4" y="15.4" width="2.4" height="2.6" fill="#fff"/>
<path d="M420.6 21.8 C420.6 14.4 415.8 11 411.2 11 C406 11 403 15.4 403 20.4 C403 26.6 407.6 29.2 412.2 29.2 C415 29.2 417.6 28.4 419.8 27 V23.6 C417.6 25 415.6 25.6 413 25.6 C410.2 25.6 408 24 407.8 21.8 Z M407.9 18.6 C408.2 16.4 409.8 14.6 412.4 14.6 C414.8 14.6 416.2 16.4 416.2 18.6 Z" fill="#1883d7"/>
<path d="M445 13.6 H452 L453.6 15.6 H465 V28 H445 Z" fill="#f6d27a"/>
<path d="M445 16.6 H465" stroke="#e9bd52" stroke-width="0.8"/>
<path d="M448.4 21.6 H461.6 V28 H458.4 V24.6 H451.6 V28 H448.4 Z" fill="#2a9ede"/>
<rect x="437.5" y="36" width="35.5" height="2" fill="#8cc4ef"/>
<path d="M493.2 15.4 C493.2 11 502.6 11 502.6 15.4" fill="none" stroke="#fff" stroke-width="1.2"/>
<rect x="487.6" y="15.2" width="20.8" height="14.8" rx="1" fill="#fff"/>
<rect x="493" y="17.6" width="4.8" height="4.6" fill="#f25022"/>
<rect x="498.4" y="17.6" width="4.8" height="4.6" fill="#7fba00"/>
<rect x="493" y="22.8" width="4.8" height="4.6" fill="#00a4ef"/>
<rect x="498.4" y="22.8" width="4.8" height="4.6" fill="#ffb900"/>
<path d="M530.6 17.6 L541.6 11.4 L552.6 17.6 V28.6 H530.6 Z" fill="#fff"/>
<path d="M530.8 17.8 L541.6 22.8 L550.6 17.6 L542.6 25.4" fill="none" stroke="#1b1e25" stroke-width="1.2"/>
<rect x="584" y="12.6" width="11" height="15.2" fill="#fff"/>
<path d="M586.4 15.6 H593.4 M586.4 18 H593.4 M586.4 20.4 H593.4 M586.4 22.8 H593.4 M586.4 25.2 H593.4" stroke="#2b579a" stroke-width="0.9"/>
<path d="M574.6 12.6 L586 10.2 V29.8 L574.6 27.4 Z" fill="#2b579a"/>
<rect x="567.3" y="36" width="35.2" height="2" fill="#8cc4ef"/>
<rect x="627.6" y="12.6" width="10.8" height="15.2" fill="#fff"/>
<path d="M629.4 15.6 H636.8 M629.4 18.6 H636.8 M629.4 21.6 H636.8 M629.4 24.6 H636.8 M632.8 13 V27.4" stroke="#217346" stroke-width="0.9"/>
<path d="M618.1 12.6 L630 10.2 V29.8 L618.1 27.4 Z" fill="#1d6b40"/>
<rect x="607.2" y="36" width="42.2" height="2" fill="#8cc4ef"/>
<circle cx="671.3" cy="20" r="10" fill="#db4437"/>
<path d="M671.3 20 L662.64 15 A10 10 0 0 0 666.3 28.66 Z" fill="#0f9d58"/>
<path d="M671.3 20 L666.3 28.66 A10 10 0 0 0 681.3 20 Z" fill="#f4b400"/>
<path d="M671.3 20 L681.3 20 A10 10 0 0 0 680 15 L671.3 15 Z" fill="#f4b400"/>
<circle cx="671.3" cy="20" r="4.6" fill="#fff"/>
<circle cx="671.3" cy="20" r="3.6" fill="#4285f4"/>
<rect x="654" y="36" width="35.3" height="2" fill="#8cc4ef"/>
<path d="M706 21 C703 16 708.6 12.6 714 13.4 C719.6 14.2 722.6 18.6 720.4 22.6 C718.6 25.8 716 23.4 714.2 25 C712.4 26.6 714.6 29.4 711.4 29.4 C707.4 29.4 707.6 24 706 21 Z" fill="#b9d7ef"/>
<circle cx="709" cy="19" r="1.3" fill="#e74c3c"/>
<circle cx="712.4" cy="16.4" r="1.3" fill="#2ecc71"/>
<circle cx="716.4" cy="16.6" r="1.3" fill="#f1c40f"/>
<path d="M713.4 26.6 L723.6 11.6" stroke="#c98a3a" stroke-width="1.6"/>
<path d="M722.6 12.6 L725.4 10 L724.6 13.6 Z" fill="#f0d9a0"/>
<rect x="697" y="36" width="35.5" height="2" fill="#8cc4ef"/>
<circle cx="949.6" cy="15" r="2.2" fill="none" stroke="#fff" stroke-width="1"/>
<path d="M945.6 21.6 C946 18.8 947.6 17.6 949.6 17.6 C951.8 17.6 953.2 19 953.6 21.2" fill="none" stroke="#fff" stroke-width="1"/>
<circle cx="944" cy="20.6" r="2.2" fill="none" stroke="#fff" stroke-width="1"/>
<path d="M940.2 26.8 C940.6 24 942 23 944 23 C946 23 947.4 24 947.8 26.8" fill="none" stroke="#fff" stroke-width="1"/>
<path d="M973.2 22.8 L978.6 17.4 L984 22.8" fill="none" stroke="#fff" stroke-width="1.1"/>
<rect x="995.6" y="15.4" width="11" height="7.8" fill="none" stroke="#fff" stroke-width="1"/>
<path d="M1001 23.4 V25.6 M998 26 H1004 M992.8 15.4 H995 M992.8 17.6 H995 M992.8 19.8 H995 M994 20 V26" stroke="#fff" stroke-width="1"/>
<path d="M1014.2 17.6 H1016.6 L1020 14.6 V25.4 L1016.6 22.6 H1014.2 Z" fill="none" stroke="#fff" stroke-width="1"/>
<path d="M1022 17.4 C1023 18.8 1023 21.2 1022 22.6 M1024.2 15.8 C1026 18 1026 22 1024.2 24.2 M1026.4 14.4 C1029 17.4 1029 22.6 1026.4 25.6" fill="none" stroke="#fff" stroke-width="1"/>
<rect x="1035.5" y="14.6" width="19.8" height="10.6" fill="none" stroke="#fff" stroke-width="1"/>
<path d="M1038 17.4 H1053 M1038 19.6 H1053" stroke="#fff" stroke-width="0.8" stroke-dasharray="1.2 0.9"/>
<path d="M1040 22.2 H1051" stroke="#fff" stroke-width="1"/>
<path d="M1164.1 13 H1178 V25 H1172 L1169 28 V25 H1164.1 Z" fill="#fff"/>
<path d="M1166.4 16.2 H1175.6 M1166.4 18.8 H1175.6 M1166.4 21.4 H1172" stroke="#888" stroke-width="1"/>
<circle cx="1177.9" cy="27" r="6.2" fill="#2f3237" stroke="#5a5d62" stroke-width="1"/>
<path d="M1196 3 V38" stroke="#4a4d52" stroke-width="1"/>
</svg>
<div class="a t" style="left:622.40px;top:661px;font-size:9.5px;color:#fff;font-weight:bold;transform:scaleX(1.0404);transform-origin:0 3px;">X</div>
<div class="a t" style="left:577.20px;top:661px;font-size:8.5px;color:#fff;font-weight:bold;transform:scaleX(0.9214);transform-origin:0 3px;">W</div>
<div class="a t" style="left:1175.40px;top:667.4px;font-size:9.5px;color:#fff;font-weight:bold;transform:scaleX(0.9817);transform-origin:0 3px;">5</div>
<div class="a" style="left:391px;top:133px;width:190px;height:75px;background:#ffffff;border:1px solid #c8c8c8;box-sizing:border-box;box-shadow:1px 2px 3px rgba(0,0,0,0.12);"></div>
<div class="a" style="left:386.5px;top:129px;width:198.5px;height:79px;border:4.5px solid #f87e25;box-sizing:border-box;border-radius:13px;"></div>
<div class="a t" style="left:402.50px;top:146.6px;font-size:10.5px;color:#5a5a5a;font-weight:bold;">Orientation</div>
<div class="a t" style="left:402.40px;top:165.5px;font-size:10.5px;color:#5a5a5a;">Rotate your text diagonally or</div>
<div class="a t" style="left:402.40px;top:178.3px;font-size:10.5px;color:#5a5a5a;transform:scaleX(0.9899);transform-origin:0 4px;">vertically. This is a great way to label</div>
<div class="a t" style="left:402.40px;top:191.2px;font-size:10.5px;color:#5a5a5a;transform:scaleX(1.0178);transform-origin:0 4px;">narrow columns.</div>
<div class="a" style="left:385.6px;top:54.8px;width:52.8px;height:34px;border:4.3px solid #f87e25;box-sizing:border-box;"></div>
</body></html>
